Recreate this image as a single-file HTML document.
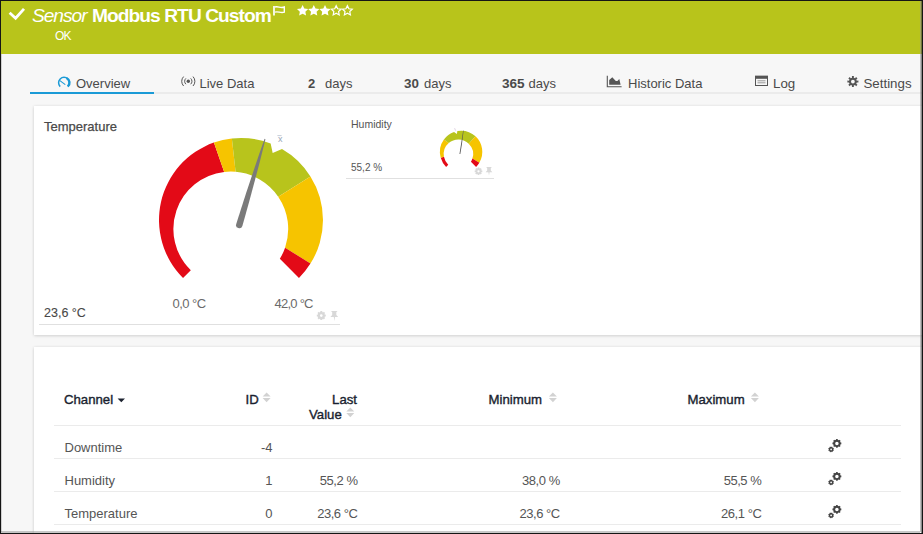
<!DOCTYPE html>
<html><head><meta charset="utf-8">
<style>
*{margin:0;padding:0;box-sizing:border-box}
html,body{width:923px;height:534px;overflow:hidden;background:#f7f7f7}
body{position:relative;font-family:"Liberation Sans",sans-serif;color:#555}
.a{position:absolute;white-space:nowrap}
#hdr{position:absolute;left:0;top:0;width:923px;height:54px;background:#b8c41b}
.frame{position:absolute;left:0;top:0;width:923px;height:534px;border:1px solid #151515;pointer-events:none;z-index:50}
.fr2{position:absolute;right:1px;top:1px;width:1px;height:532px;background:rgba(70,70,70,.62);z-index:49}
.fr3{position:absolute;right:2px;top:1px;width:1px;height:531px;background:rgba(150,150,150,.6);z-index:49}
.fl2{position:absolute;left:1px;top:54px;width:1px;height:478px;background:rgba(120,120,120,.3);z-index:49}
.fb2{position:absolute;left:1px;bottom:1px;height:2px;width:919px;background:rgba(150,150,150,.52);z-index:49}
.tab{position:absolute;top:76px;font-size:13px;color:#4a4a4a;line-height:16px}
.tab b{font-weight:bold}
.t1{position:absolute;white-space:nowrap;line-height:1}
.th{font-size:13.2px;color:#1a1f30;-webkit-text-stroke:0.38px #1a1f30}
.td{font-size:13px;color:#555}
.r{text-align:right}
.n{letter-spacing:-0.45px}
.panel{position:absolute;background:#fff;box-shadow:0 1px 3px rgba(0,0,0,.13),0 0 3px rgba(0,0,0,.07)}
</style></head><body>
<div id="hdr"></div>
<!-- header -->
<svg class="a" style="left:0;top:0" width="360" height="30" viewBox="0 0 360 30">
<path d="M9.6 12.8 L15.6 18.3 L24 8.9" fill="none" stroke="#fff" stroke-width="2.8" stroke-linecap="butt"/>
<path d="M274 6 V15.6" stroke="#fff" stroke-width="1.7"/>
<path d="M275 7 C278 5.8 280.5 8.6 284.3 7 V12.2 C280.5 13.6 278 10.8 275 12.2" fill="none" stroke="#fff" stroke-width="1.4"/>
<g fill="#fff"><path d="M302.60 4.90 L304.30 8.45 L308.21 8.98 L305.36 11.70 L306.07 15.57 L302.60 13.70 L299.13 15.57 L299.84 11.70 L296.99 8.98 L300.90 8.45Z"/><path d="M313.80 4.90 L315.50 8.45 L319.41 8.98 L316.56 11.70 L317.27 15.57 L313.80 13.70 L310.33 15.57 L311.04 11.70 L308.19 8.98 L312.10 8.45Z"/><path d="M325.00 4.90 L326.70 8.45 L330.61 8.98 L327.76 11.70 L328.47 15.57 L325.00 13.70 L321.53 15.57 L322.24 11.70 L319.39 8.98 L323.30 8.45Z"/></g>
<g fill="none" stroke="#fff" stroke-width="1.2" stroke-linejoin="miter"><path d="M336.20 5.70 L337.67 8.78 L341.05 9.22 L338.58 11.57 L339.20 14.93 L336.20 13.30 L333.20 14.93 L333.82 11.57 L331.35 9.22 L334.73 8.78Z"/><path d="M347.40 5.70 L348.87 8.78 L352.25 9.22 L349.78 11.57 L350.40 14.93 L347.40 13.30 L344.40 14.93 L345.02 11.57 L342.55 9.22 L345.93 8.78Z"/></g>
</svg>
<div class="a" style="left:32px;top:5px;font-size:19.2px;font-style:italic;color:#fff;line-height:22px;letter-spacing:-1.05px">Sensor</div>
<div class="a" style="left:92px;top:5px;font-size:19.2px;font-weight:bold;color:#fff;line-height:22px;letter-spacing:-0.95px">Modbus RTU Custom</div>
<div class="a" style="left:55px;top:29px;font-size:12px;color:#fff;line-height:14px;letter-spacing:-0.8px">OK</div>

<!-- tabs -->
<div class="a" style="left:30px;top:92px;width:893px;height:2px;background:#ebebeb"></div>
<div class="a" style="left:30px;top:92px;width:124px;height:2px;background:#1a9ad6"></div>
<svg class="a" style="left:0;top:70px" width="923" height="22" viewBox="0 70 923 22">
<!-- overview gauge icon -->
<path d="M60.2 86.6 A5.4 5.4 0 1 1 67.8 86.6" fill="none" stroke="#1a9ad6" stroke-width="1.5"/>
<path d="M66.5 78.0 A5.1 5.1 0 0 1 67.8 86.4" fill="none" stroke="#1a9ad6" stroke-width="2.4"/>
<path d="M59.9 80.6 L65.3 84.6" stroke="#1a9ad6" stroke-width="1.1"/>
<!-- live data icon -->
<circle cx="188.3" cy="81.3" r="1.7" fill="#555"/>
<path d="M185.9 78.4 A4 4 0 0 0 185.9 84.2 M190.7 78.4 A4 4 0 0 1 190.7 84.2" fill="none" stroke="#555" stroke-width="1"/>
<path d="M183.6 76.6 A6.8 6.8 0 0 0 183.6 86 M193 76.6 A6.8 6.8 0 0 1 193 86" fill="none" stroke="#555" stroke-width="1"/>
<!-- historic data icon -->
<path d="M607.3 75.8 V86.8 H621.6" fill="none" stroke="#555" stroke-width="1.1"/>
<path d="M609.2 84.7 V80 L612.3 77.2 L615.8 81 L617.4 81 L619.3 79 L620.6 84.7Z" fill="#555"/>
<!-- log icon -->
<rect x="755.5" y="76.3" width="12" height="9.2" fill="none" stroke="#555" stroke-width="1"/>
<rect x="755" y="75.8" width="13" height="3" fill="#555"/>
<path d="M757.5 80.8 H765.5 M757.5 82.8 H765.5" stroke="#999" stroke-width="1"/>
<!-- settings gear -->
<g transform="translate(852.9 81.6)" fill="#555"><path fill-rule="evenodd" d="M-0.98 -5.51 L0.98 -5.51 L0.89 -3.90 L2.13 -3.39 L3.20 -4.59 L4.59 -3.20 L3.39 -2.13 L3.90 -0.89 L5.51 -0.98 L5.51 0.98 L3.90 0.89 L3.39 2.13 L4.59 3.20 L3.20 4.59 L2.13 3.39 L0.89 3.90 L0.98 5.51 L-0.98 5.51 L-0.89 3.90 L-2.13 3.39 L-3.20 4.59 L-4.59 3.20 L-3.39 2.13 L-3.90 0.89 L-5.51 0.98 L-5.51 -0.98 L-3.90 -0.89 L-3.39 -2.13 L-4.59 -3.20 L-3.20 -4.59 L-2.13 -3.39 L-0.89 -3.90Z M-1.90 0 a1.90 1.90 0 1 0 3.80 0 a1.90 1.90 0 1 0 -3.80 0Z"/></g>
</svg>
<div class="tab" style="left:76px">Overview</div>
<div class="tab" style="left:199.5px">Live Data</div>
<div class="tab" style="left:308px"><b>2</b></div>
<div class="tab" style="left:325px">days</div>
<div class="tab" style="left:404px;font-size:13.4px"><b>30</b></div>
<div class="tab" style="left:424px">days</div>
<div class="tab" style="left:502px;font-size:13.6px"><b>365</b></div>
<div class="tab" style="left:528.5px">days</div>
<div class="tab" style="left:628px">Historic Data</div>
<div class="tab" style="left:773px;font-size:13.3px">Log</div>
<div class="tab" style="left:863.5px;font-size:13.3px">Settings</div>

<!-- panel 1 -->
<div class="panel" style="left:34px;top:106px;width:900px;height:229px"></div>
<div class="t1" style="left:44px;top:119.5px;font-size:13px;color:#4a4a4a;-webkit-text-stroke:0.25px #4a4a4a">Temperature</div>
<div class="a" style="left:39px;top:324px;width:301px;height:1px;background:#e0e0e0"></div>
<div class="t1" style="left:44px;top:307.2px;font-size:12.5px;color:#484848;-webkit-text-stroke:0.1px #484848">23,6 °C</div>
<div class="t1" style="left:172.5px;top:297.3px;font-size:13px;color:#6a6a6a;letter-spacing:-0.55px">0,0 °C</div>
<div class="t1" style="left:274.5px;top:297.3px;font-size:13px;color:#6a6a6a;letter-spacing:-0.75px">42,0 °C</div>
<div class="t1" style="left:351px;top:118.9px;font-size:10.5px;color:#555">Humidity</div>
<div class="t1" style="left:351px;top:163.4px;font-size:10px;color:#555">55,2 %</div>
<div class="a" style="left:346px;top:178px;width:148px;height:1px;background:#e0e0e0"></div>
<svg class="a" style="left:0;top:0" width="923" height="534" viewBox="0 0 923 534">
<path fill="#e30a17" d="M183.02 277.98 A82.00 82.00 0 0 1 213.90 142.61 L224.18 171.98 A57.40 57.40 0 0 0 190.82 270.18 Z"/><path fill="#f6c400" d="M213.90 142.61 A82.00 82.00 0 0 1 231.86 138.51 L235.59 171.80 A57.40 57.40 0 0 0 224.18 171.98 Z"/><path fill="#b8c41c" d="M231.86 138.51 A82.00 82.00 0 0 1 270.65 143.55 L272.67 153.01 L282.00 148.99 A82.00 82.00 0 0 1 310.46 176.43 L278.22 196.65 A57.40 57.40 0 0 0 235.59 171.80 Z"/><path fill="#f6c400" d="M310.46 176.43 A82.00 82.00 0 0 1 310.46 263.57 L285.08 247.65 A57.40 57.40 0 0 0 278.22 196.65 Z"/><path fill="#e30a17" d="M310.46 263.57 A82.00 82.00 0 0 1 298.98 277.98 L279.84 258.84 A57.40 57.40 0 0 0 285.08 247.65 Z"/>
<path fill="#e30a17" d="M446.11 166.89 A21.20 21.20 0 0 1 440.72 157.74 L443.95 156.82 A14.70 14.70 0 0 0 448.26 164.74 Z"/><path fill="#f6c400" d="M440.72 157.74 A21.20 21.20 0 0 1 443.88 139.53 L448.74 143.02 A14.70 14.70 0 0 0 443.95 156.82 Z"/><path fill="#b8c41c" d="M443.88 139.53 A21.20 21.20 0 0 1 454.02 131.92 L456.90 133.99 L457.35 131.04 A21.20 21.20 0 0 1 475.50 136.34 L468.74 143.65 A14.70 14.70 0 0 0 448.74 143.02 Z"/><path fill="#f6c400" d="M475.50 136.34 A21.20 21.20 0 0 1 479.35 162.69 L472.40 158.58 A14.70 14.70 0 0 0 468.74 143.65 Z"/><path fill="#e30a17" d="M479.35 162.69 A21.20 21.20 0 0 1 476.09 166.89 L470.95 161.75 A14.70 14.70 0 0 0 472.40 158.58 Z"/>
<path fill="#7a7a7a" d="M242.37 225.92 Q254.74 182.77 265.43 139.13 L264.57 138.87 Q249.56 181.23 236.23 224.08 A3.2 3.2 0 0 0 242.37 225.92 Z"/>
<path d="M454.6 128.2 L455.6 130.6" stroke="#d8c8dc" stroke-width="0.8"/>
<path d="M460.3 154 L461.8 145 L463.6 130.5 L463.2 130.5 L460.9 145 L459.5 154Z" fill="#555"/>
<text x="278" y="142.3" font-family="Liberation Sans" font-size="9" fill="#98a6b8">x</text>
<path d="M277.4 135.6 H281.6" stroke="#b0bac8" stroke-width="0.7"/>
<g fill="#d8d8d8">
<g transform="translate(321.3 315.6)"><path fill-rule="evenodd" d="M-0.99 -4.49 L0.99 -4.49 L0.96 -3.57 L1.85 -3.21 L2.48 -3.87 L3.87 -2.48 L3.21 -1.85 L3.57 -0.96 L4.49 -0.99 L4.49 0.99 L3.57 0.96 L3.21 1.85 L3.87 2.48 L2.48 3.87 L1.85 3.21 L0.96 3.57 L0.99 4.49 L-0.99 4.49 L-0.96 3.57 L-1.85 3.21 L-2.48 3.87 L-3.87 2.48 L-3.21 1.85 L-3.57 0.96 L-4.49 0.99 L-4.49 -0.99 L-3.57 -0.96 L-3.21 -1.85 L-3.87 -2.48 L-2.48 -3.87 L-1.85 -3.21 L-0.96 -3.57Z M-1.35 0 a1.35 1.35 0 1 0 2.70 0 a1.35 1.35 0 1 0 -2.70 0Z"/></g>
<path d="M331 311 H337.5 L336.3 312.3 V315 L338.2 317 H335 L334.4 321 L333.8 317 H330.4 L332.2 315 V312.3Z"/>
<g transform="translate(478.5 171.3) scale(0.85)"><path fill-rule="evenodd" d="M-0.99 -4.49 L0.99 -4.49 L0.96 -3.57 L1.85 -3.21 L2.48 -3.87 L3.87 -2.48 L3.21 -1.85 L3.57 -0.96 L4.49 -0.99 L4.49 0.99 L3.57 0.96 L3.21 1.85 L3.87 2.48 L2.48 3.87 L1.85 3.21 L0.96 3.57 L0.99 4.49 L-0.99 4.49 L-0.96 3.57 L-1.85 3.21 L-2.48 3.87 L-3.87 2.48 L-3.21 1.85 L-3.57 0.96 L-4.49 0.99 L-4.49 -0.99 L-3.57 -0.96 L-3.21 -1.85 L-3.87 -2.48 L-2.48 -3.87 L-1.85 -3.21 L-0.96 -3.57Z M-1.35 0 a1.35 1.35 0 1 0 2.70 0 a1.35 1.35 0 1 0 -2.70 0Z"/></g>
<path d="M486.2 167 H491.8 L490.8 168.2 V170.5 L492.4 172.2 H489.6 L489 175.5 L488.4 172.2 H485.6 L487.2 170.5 V168.2Z"/>
</g>
</svg>

<!-- panel 2 -->
<div class="panel" style="left:34px;top:347px;width:900px;height:200px"></div>
<div class="a" style="left:54px;top:425px;width:847px;height:1px;background:#ebebeb"></div><div class="a" style="left:54px;top:458px;width:847px;height:1px;background:#ebebeb"></div><div class="a" style="left:54px;top:491px;width:847px;height:1px;background:#ebebeb"></div><div class="a" style="left:54px;top:524px;width:847px;height:1px;background:#ebebeb"></div>
<div class="t1 th" style="left:64px;top:393.1px">Channel</div>
<div class="t1 th" style="left:245.5px;top:393.1px">ID</div>
<div class="t1 th r" style="right:566.0px;top:393.1px">Last</div>
<div class="t1 th" style="left:309px;top:407.6px">Value</div>
<div class="t1 th" style="left:488.5px;top:393.1px">Minimum</div>
<div class="t1 th" style="left:687.5px;top:393.1px">Maximum</div>
<div class="t1 td" style="left:64.5px;top:440.8px">Downtime</div>
<div class="t1 td r" style="right:650.5px;top:440.8px">-4</div>
<div class="t1 td" style="left:64.5px;top:473.8px">Humidity</div>
<div class="t1 td r" style="right:650.5px;top:473.8px">1</div>
<div class="t1 td r n" style="right:565.5px;top:473.8px">55,2 %</div>
<div class="t1 td r n" style="right:363.2px;top:473.8px">38,0 %</div>
<div class="t1 td r n" style="right:161.6px;top:473.8px">55,5 %</div>
<div class="t1 td" style="left:64.5px;top:506.8px">Temperature</div>
<div class="t1 td r" style="right:650.5px;top:506.8px">0</div>
<div class="t1 td r n" style="right:565.5px;top:506.8px">23,6 °C</div>
<div class="t1 td r n" style="right:363.2px;top:506.8px">23,6 °C</div>
<div class="t1 td r n" style="right:161.6px;top:506.8px">26,1 °C</div>
<svg class="a" style="left:0;top:0" width="923" height="534" viewBox="0 0 923 534">
<path d="M117.6 398.4 H125 L121.3 402.2Z" fill="#1d2330"/>
<g transform="translate(836.9 443.4)"><path fill="#444" fill-rule="evenodd" d="M-0.79 -4.43 L0.79 -4.43 L0.84 -3.71 L2.02 -3.22 L2.57 -3.69 L3.69 -2.57 L3.22 -2.02 L3.71 -0.84 L4.43 -0.79 L4.43 0.79 L3.71 0.84 L3.22 2.02 L3.69 2.57 L2.57 3.69 L2.02 3.22 L0.84 3.71 L0.79 4.43 L-0.79 4.43 L-0.84 3.71 L-2.02 3.22 L-2.57 3.69 L-3.69 2.57 L-3.22 2.02 L-3.71 0.84 L-4.43 0.79 L-4.43 -0.79 L-3.71 -0.84 L-3.22 -2.02 L-3.69 -2.57 L-2.57 -3.69 L-2.02 -3.22 L-0.84 -3.71Z M-1.75 0 a1.75 1.75 0 1 0 3.50 0 a1.75 1.75 0 1 0 -3.50 0Z"/></g><g transform="translate(831.1 449.4) rotate(20)"><path fill="#444" fill-rule="evenodd" d="M-0.51 -2.85 L0.51 -2.85 L0.53 -2.34 L1.28 -2.03 L1.66 -2.38 L2.38 -1.66 L2.03 -1.28 L2.34 -0.53 L2.85 -0.51 L2.85 0.51 L2.34 0.53 L2.03 1.28 L2.38 1.66 L1.66 2.38 L1.28 2.03 L0.53 2.34 L0.51 2.85 L-0.51 2.85 L-0.53 2.34 L-1.28 2.03 L-1.66 2.38 L-2.38 1.66 L-2.03 1.28 L-2.34 0.53 L-2.85 0.51 L-2.85 -0.51 L-2.34 -0.53 L-2.03 -1.28 L-2.38 -1.66 L-1.66 -2.38 L-1.28 -2.03 L-0.53 -2.34Z M-0.85 0 a0.85 0.85 0 1 0 1.70 0 a0.85 0.85 0 1 0 -1.70 0Z"/></g>
<g transform="translate(836.9 476.4)"><path fill="#444" fill-rule="evenodd" d="M-0.79 -4.43 L0.79 -4.43 L0.84 -3.71 L2.02 -3.22 L2.57 -3.69 L3.69 -2.57 L3.22 -2.02 L3.71 -0.84 L4.43 -0.79 L4.43 0.79 L3.71 0.84 L3.22 2.02 L3.69 2.57 L2.57 3.69 L2.02 3.22 L0.84 3.71 L0.79 4.43 L-0.79 4.43 L-0.84 3.71 L-2.02 3.22 L-2.57 3.69 L-3.69 2.57 L-3.22 2.02 L-3.71 0.84 L-4.43 0.79 L-4.43 -0.79 L-3.71 -0.84 L-3.22 -2.02 L-3.69 -2.57 L-2.57 -3.69 L-2.02 -3.22 L-0.84 -3.71Z M-1.75 0 a1.75 1.75 0 1 0 3.50 0 a1.75 1.75 0 1 0 -3.50 0Z"/></g><g transform="translate(831.1 482.4) rotate(20)"><path fill="#444" fill-rule="evenodd" d="M-0.51 -2.85 L0.51 -2.85 L0.53 -2.34 L1.28 -2.03 L1.66 -2.38 L2.38 -1.66 L2.03 -1.28 L2.34 -0.53 L2.85 -0.51 L2.85 0.51 L2.34 0.53 L2.03 1.28 L2.38 1.66 L1.66 2.38 L1.28 2.03 L0.53 2.34 L0.51 2.85 L-0.51 2.85 L-0.53 2.34 L-1.28 2.03 L-1.66 2.38 L-2.38 1.66 L-2.03 1.28 L-2.34 0.53 L-2.85 0.51 L-2.85 -0.51 L-2.34 -0.53 L-2.03 -1.28 L-2.38 -1.66 L-1.66 -2.38 L-1.28 -2.03 L-0.53 -2.34Z M-0.85 0 a0.85 0.85 0 1 0 1.70 0 a0.85 0.85 0 1 0 -1.70 0Z"/></g>
<g transform="translate(836.9 509.4)"><path fill="#444" fill-rule="evenodd" d="M-0.79 -4.43 L0.79 -4.43 L0.84 -3.71 L2.02 -3.22 L2.57 -3.69 L3.69 -2.57 L3.22 -2.02 L3.71 -0.84 L4.43 -0.79 L4.43 0.79 L3.71 0.84 L3.22 2.02 L3.69 2.57 L2.57 3.69 L2.02 3.22 L0.84 3.71 L0.79 4.43 L-0.79 4.43 L-0.84 3.71 L-2.02 3.22 L-2.57 3.69 L-3.69 2.57 L-3.22 2.02 L-3.71 0.84 L-4.43 0.79 L-4.43 -0.79 L-3.71 -0.84 L-3.22 -2.02 L-3.69 -2.57 L-2.57 -3.69 L-2.02 -3.22 L-0.84 -3.71Z M-1.75 0 a1.75 1.75 0 1 0 3.50 0 a1.75 1.75 0 1 0 -3.50 0Z"/></g><g transform="translate(831.1 515.4) rotate(20)"><path fill="#444" fill-rule="evenodd" d="M-0.51 -2.85 L0.51 -2.85 L0.53 -2.34 L1.28 -2.03 L1.66 -2.38 L2.38 -1.66 L2.03 -1.28 L2.34 -0.53 L2.85 -0.51 L2.85 0.51 L2.34 0.53 L2.03 1.28 L2.38 1.66 L1.66 2.38 L1.28 2.03 L0.53 2.34 L0.51 2.85 L-0.51 2.85 L-0.53 2.34 L-1.28 2.03 L-1.66 2.38 L-2.38 1.66 L-2.03 1.28 L-2.34 0.53 L-2.85 0.51 L-2.85 -0.51 L-2.34 -0.53 L-2.03 -1.28 L-2.38 -1.66 L-1.66 -2.38 L-1.28 -2.03 L-0.53 -2.34Z M-0.85 0 a0.85 0.85 0 1 0 1.70 0 a0.85 0.85 0 1 0 -1.70 0Z"/></g>
<g fill="#d2d2d2"><path d="M266.6 392.4 L270.6 396.6 L262.6 396.6 Z M262.6 397.9 L270.6 397.9 L266.6 402.3 Z"/><path d="M350.3 407.4 L354.3 411.6 L346.3 411.6 Z M346.3 412.9 L354.3 412.9 L350.3 417.3 Z"/><path d="M552.9 392.4 L556.9 396.6 L548.9 396.6 Z M548.9 397.9 L556.9 397.9 L552.9 402.3 Z"/><path d="M754.9 392.4 L758.9 396.6 L750.9 396.6 Z M750.9 397.9 L758.9 397.9 L754.9 402.3 Z"/></g>

</svg>

<div class="frame"></div><div class="fr2"></div><div class="fr3"></div><div class="fb2"></div><div class="fl2"></div>
</body></html>
